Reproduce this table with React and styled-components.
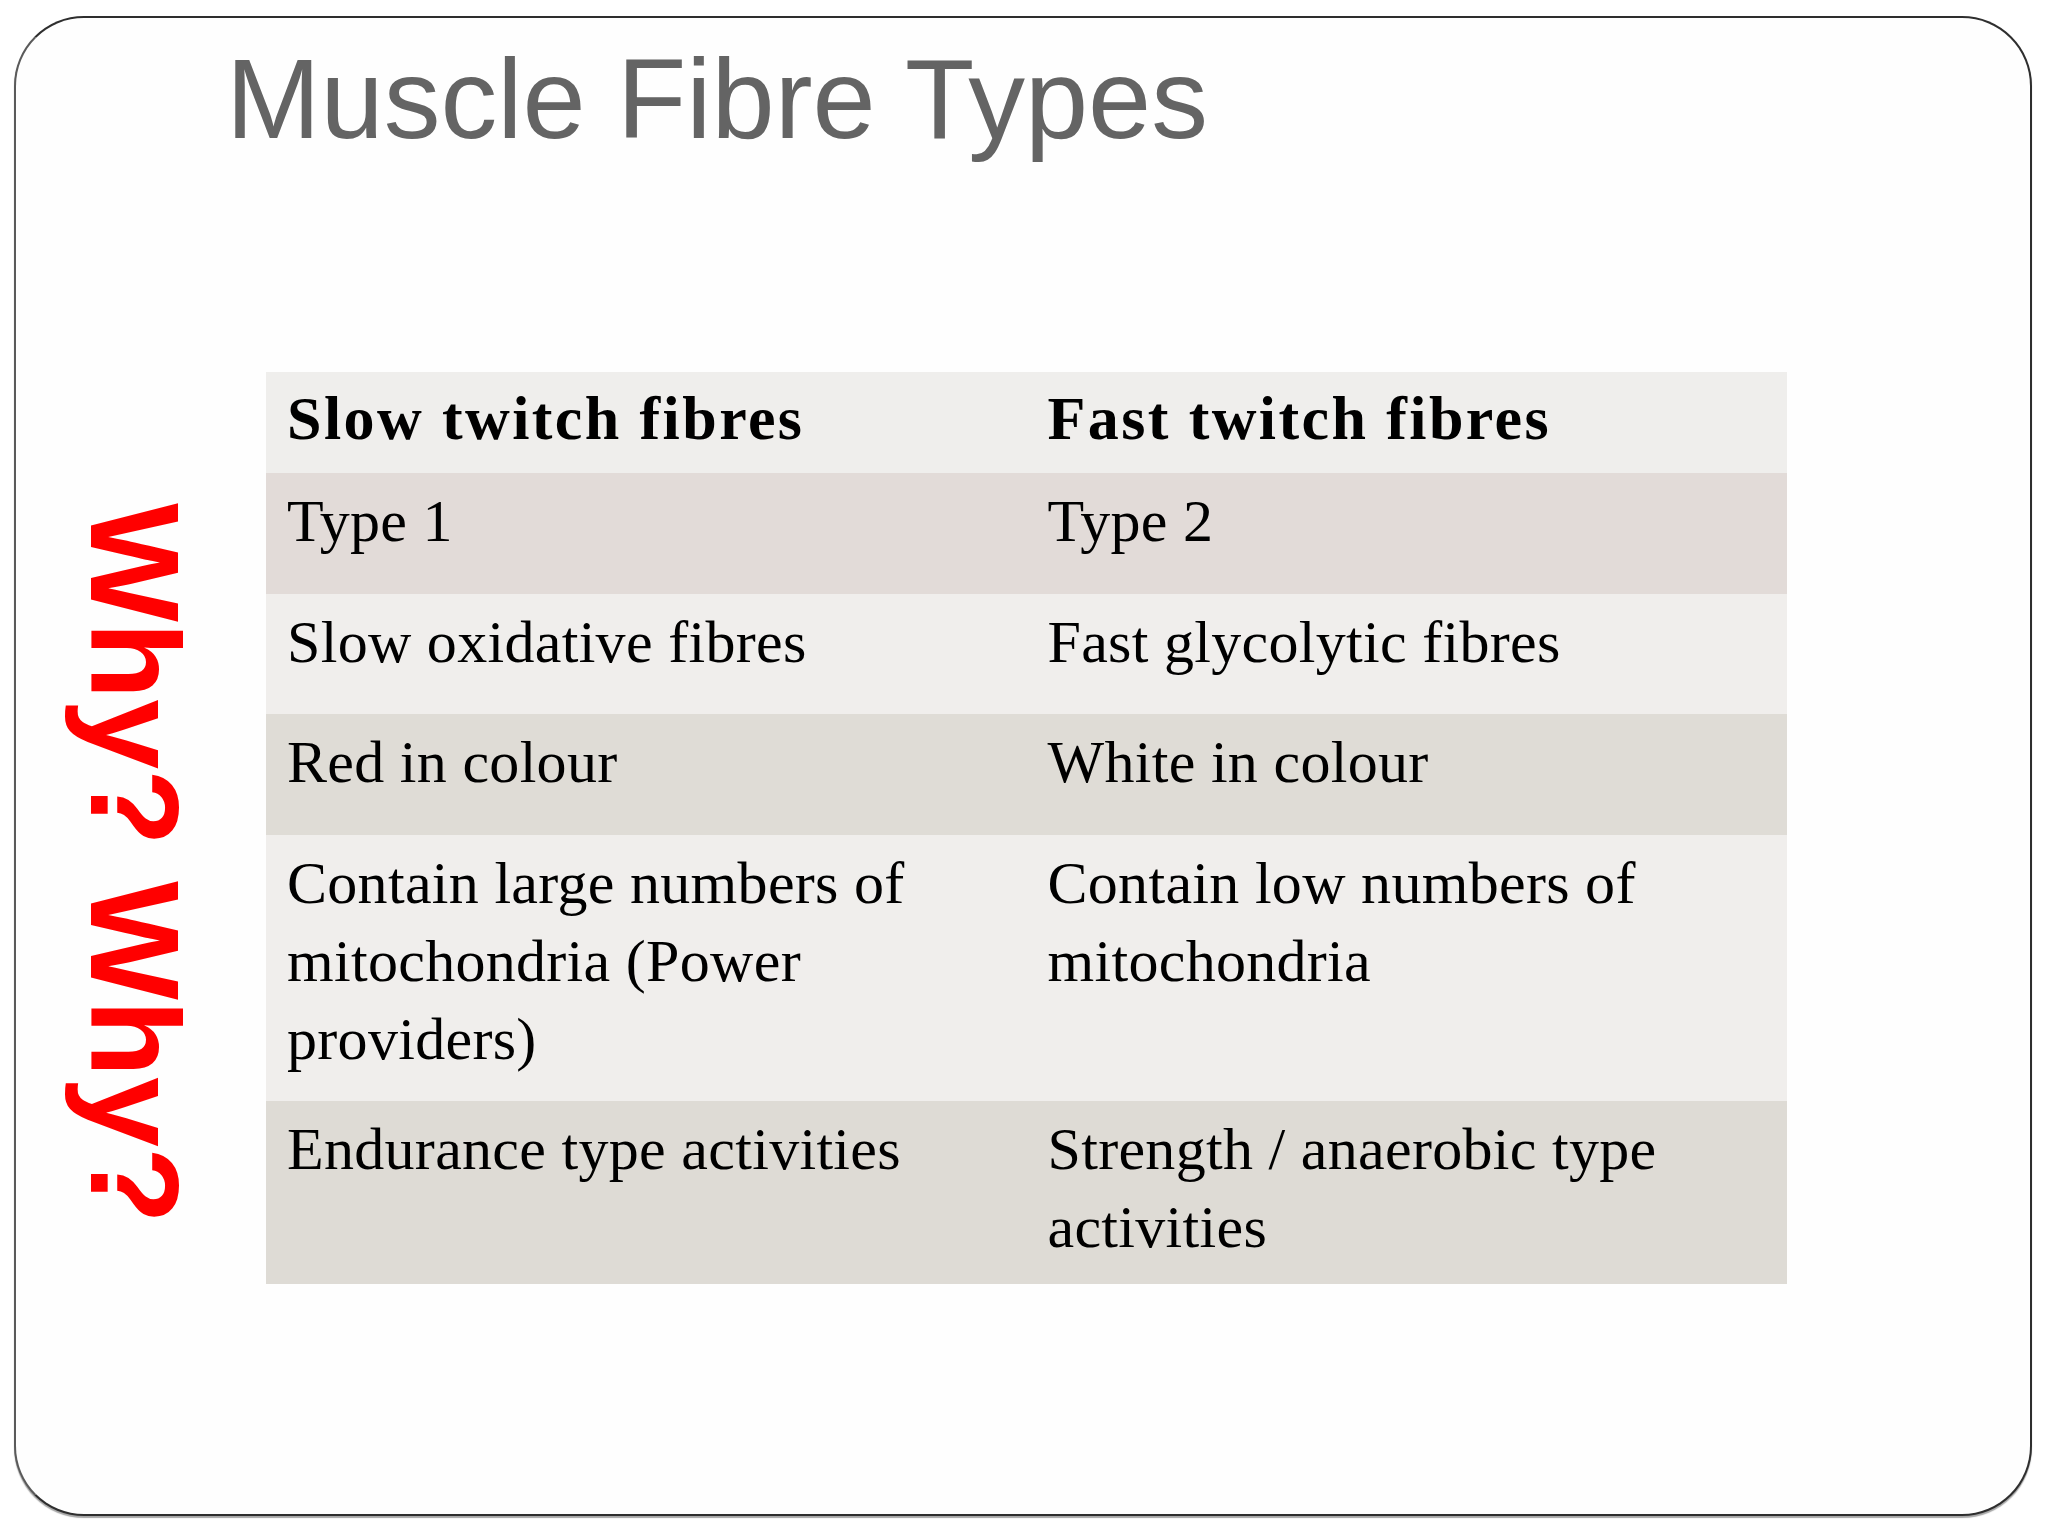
import React from 'react';
import styled, { createGlobalStyle } from 'styled-components';

const rows = [
  { left: 'Slow twitch fibres', right: 'Fast twitch fibres', bg: '#efeeec', h: 101, head: true },
  { left: 'Type 1', right: 'Type 2', bg: '#e2dbd8', h: 121 },
  { left: 'Slow oxidative fibres', right: 'Fast glycolytic fibres', bg: '#f0eeec', h: 120 },
  { left: 'Red in colour', right: 'White in colour', bg: '#dfdcd6', h: 121 },
  {
    left: 'Contain large numbers of mitochondria (Power providers)',
    right: 'Contain low numbers of mitochondria',
    bg: '#f0eeec',
    h: 266,
  },
  { left: 'Endurance type activities', right: 'Strength / anaerobic type activities', bg: '#dedbd5', h: 183 },
];

const App = () => {
  return (
    <>
      <GlobalStyle />
      <Page>
        <Slide>
          <Title>Muscle Fibre Types</Title>
          <Body>
            <WhyLabel>Why? Why?</WhyLabel>
            <Table>
              {rows.map((row, i) => (
                <Row key={i} $bg={row.bg} $h={row.h}>
                  <Cell $head={row.head}>{row.left}</Cell>
                  <Cell $head={row.head}>{row.right}</Cell>
                </Row>
              ))}
            </Table>
          </Body>
        </Slide>
      </Page>
    </>
  );
};

export default App;

// styled-components
const GlobalStyle = createGlobalStyle`
  html, body {
    margin: 0;
    padding: 0;
    background: #ffffff;
  }
  * {
    box-sizing: border-box;
  }
`;

const Page = styled.div`
  width: 2048px;
  height: 1536px;
  padding: 16px 16px 0 14px;
  background: #ffffff;
`;

const Slide = styled.div`
  width: 2018px;
  height: 1500px;
  border: 2px solid #2e2e2e;
  border-left-color: #5a5a5a;
  border-radius: 70px;
  background: #fefefe;
  box-shadow: 0 2px 1px rgba(0, 0, 0, 0.35);
  display: flex;
  flex-direction: column;
  padding-top: 16px;
`;

const Title = styled.h1`
  margin: 0;
  padding-left: 210px;
  font-family: "Liberation Sans", Arial, sans-serif;
  font-weight: 400;
  font-size: 113.5px;
  line-height: 1.14;
  color: #646464;
  white-space: nowrap;
`;

const Body = styled.div`
  display: flex;
  align-items: flex-start;
  gap: 69px;
  padding-left: 55px;
  margin-top: 209px;
`;

const WhyLabel = styled.div`
  writing-mode: vertical-rl;
  width: 126px;
  margin-top: 131px;
  font-family: "Liberation Sans", Arial, sans-serif;
  font-weight: 700;
  font-size: 126px;
  line-height: 1;
  color: #ff0000;
  white-space: nowrap;
`;

const Table = styled.div`
  width: 1521px;
  display: flex;
  flex-direction: column;
`;

const Row = styled.div`
  display: grid;
  grid-template-columns: 1fr 1fr;
  height: ${(p) => p.$h}px;
  background: ${(p) => p.$bg};
`;

const Cell = styled.div`
  padding: ${(p) => (p.$head ? '7px' : '9px')} 21px 0 21px;
  font-family: "Liberation Serif", "Times New Roman", serif;
  font-size: ${(p) => (p.$head ? '62px' : '60px')};
  font-weight: ${(p) => (p.$head ? 700 : 400)};
  letter-spacing: ${(p) => (p.$head ? '2.4px' : '0.3px')};
  line-height: 78px;
  color: #000000;
`;
